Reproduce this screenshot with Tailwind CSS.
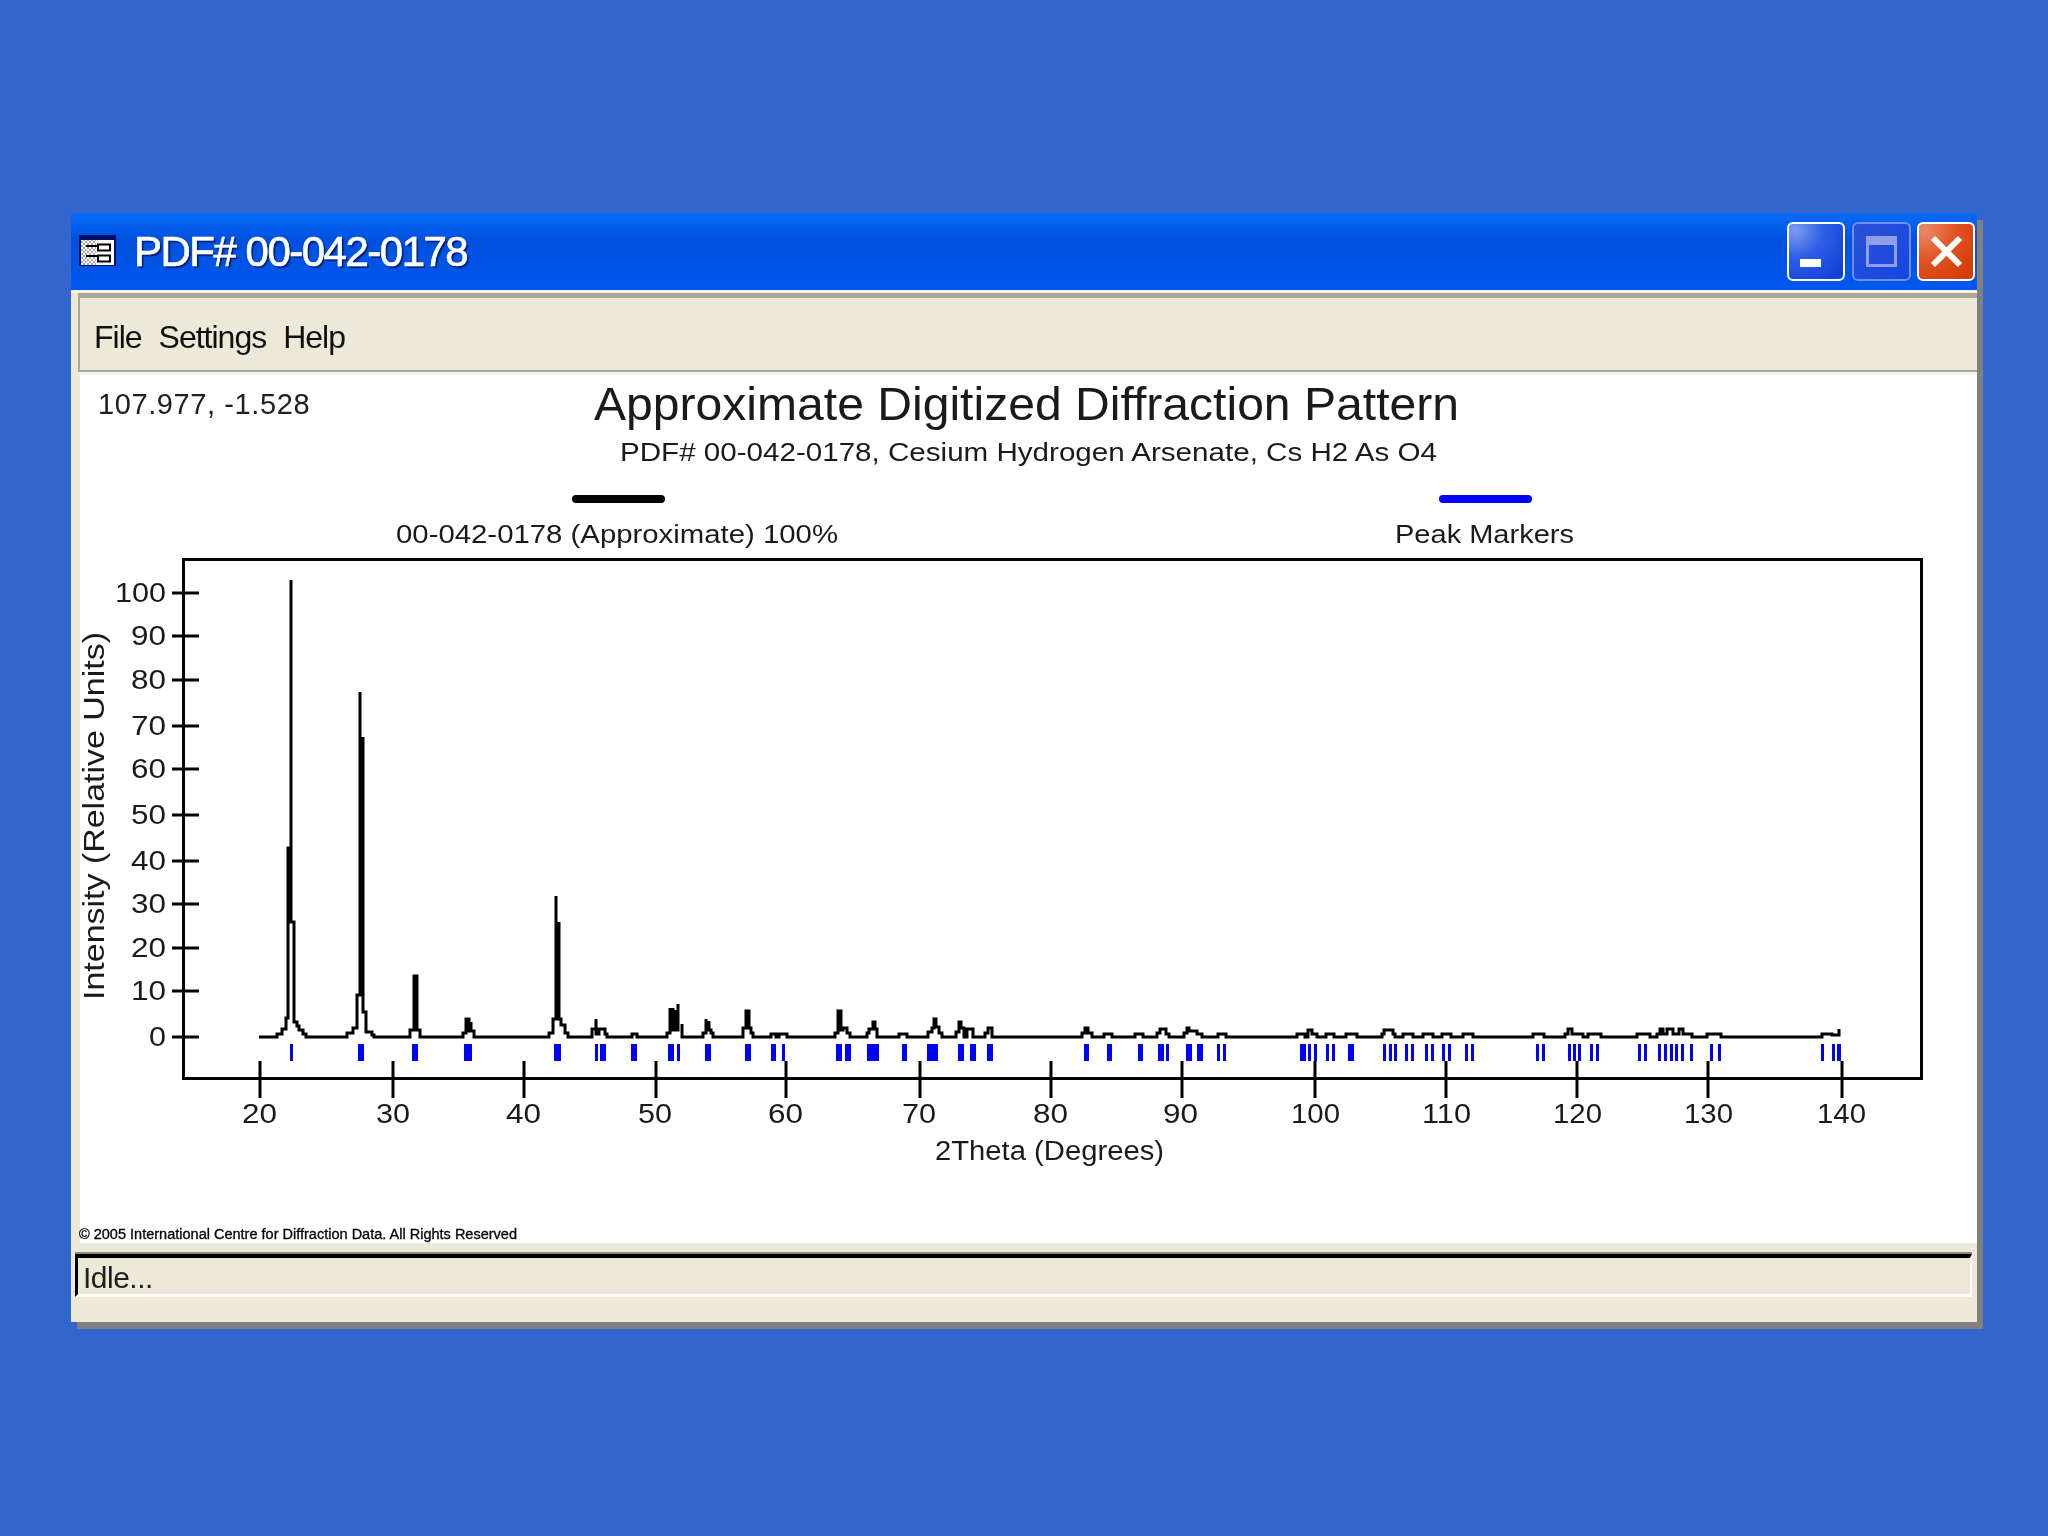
<!DOCTYPE html>
<html>
<head>
<meta charset="utf-8">
<script src="https://cdn.jsdelivr.net/npm/@tailwindcss/browser@4"></script>
</head>
<body class="m-0 bg-[#3366cc]">
<div class="relative w-[2048px] h-[1536px] bg-[#3366cc] overflow-hidden font-['Liberation_Sans',sans-serif]">
  <div class="absolute left-[71px] top-[213px] w-[1906px] h-[1109px] shadow-[6px_7px_0_0_#808080] flex flex-col bg-[#ece9d8]">
    <div class="h-[77px] shrink-0 flex items-center bg-gradient-to-b from-[#0a6cf8] via-[#0050dd] via-35% to-[#0058ee] relative">
      <svg class="ml-[8px] shrink-0 -mt-[3px] blur-[0.3px]" width="37" height="31" viewBox="0 0 37 31">
        <defs>
          <pattern id="dither" width="4" height="4" patternUnits="userSpaceOnUse">
            <rect width="4" height="4" fill="#fff"/>
            <rect width="2" height="2" fill="#a8a8a8"/>
            <rect x="2" y="2" width="2" height="2" fill="#a8a8a8"/>
          </pattern>
        </defs>
        <rect width="37" height="31" fill="#00106a"/>
        <rect x="2" y="5" width="33" height="25" fill="#fff"/>
        <rect x="2" y="5" width="15" height="25" fill="url(#dither)"/>
        <rect x="7" y="10" width="11" height="2" fill="#000"/>
        <rect x="7" y="20" width="11" height="2" fill="#000"/>
        <rect x="19" y="9.500" width="12" height="6" fill="none" stroke="#000" stroke-width="2"/>
        <rect x="19" y="20.500" width="12" height="6" fill="none" stroke="#000" stroke-width="2"/>
      </svg>
      <span class="ml-[18px] text-white text-[42px] leading-none font-normal [-webkit-text-stroke:0.7px_white] [text-shadow:2px_2px_1px_#00207a] tracking-[-1.5px] blur-[0.4px]">PDF# 00-042-0178</span>
      <div class="absolute left-[1716px] top-[9px] w-[58px] h-[59px] rounded-[6px] border-[2px] border-white bg-[radial-gradient(circle_at_12%_10%,#7d9df0,#2f5fe6_40%,#1240d8_90%)] flex items-end justify-center pb-[12px] blur-[0.3px]">
        <div class="w-[21px] h-[8px] bg-white -ml-[11px]"></div>
      </div>
      <div class="absolute left-[1781px] top-[9px] w-[59px] h-[59px] rounded-[6px] border-[2px] border-[#6f90ee] bg-gradient-to-br from-[#2a52d8] to-[#1546e0] flex items-center justify-center blur-[0.3px]">
        <div class="w-[31px] h-[31px] border-[3px] border-t-[9px] border-[#8f9fe8]"></div>
      </div>
      <div class="absolute left-[1846px] top-[9px] w-[58px] h-[59px] rounded-[6px] border-[2px] border-white bg-[radial-gradient(circle_at_10%_10%,#e88a68,#e25222_45%,#d23c06_90%)] flex items-center justify-center blur-[0.3px]">
        <svg width="33" height="33" viewBox="0 0 33 33"><path d="M3 3 L30 30 M30 3 L3 30" stroke="#fff" stroke-width="6" fill="none"/></svg>
      </div>
    </div>
    <div class="h-[3px] shrink-0 bg-[#f6f4ea]"></div>
    <div class="ml-[7px] h-[79px] shrink-0 border-l-[2px] border-t-[5px] border-b-[2px] border-[#aca899] flex items-center pl-[14px] pt-[6px] gap-[17px] text-[32px] text-[#101010] tracking-[-1px] blur-[0.4px] leading-none">
      <span>File</span><span>Settings</span><span>Help</span>
    </div>
    <div class="h-[3px] ml-[7px] shrink-0 bg-[#f6f4ea]"></div>
    <div class="flex-1 ml-[9px] bg-white relative min-h-0">
      <span class="absolute left-[18px] top-[15px] text-[29px] leading-none text-[#202020] tracking-[0.6px] blur-[0.4px]">107.977, -1.528</span>
    </div>
    <div class="h-[79px] shrink-0 relative">
      <div class="absolute left-[4px] top-[9px] w-[1897px] h-[45px] border-t-[2px] border-[#8a8a70]">
        <div class="h-full border-t-[4px] border-l-[3px] border-black border-b-[3px] border-r-[2px] border-b-[#fffdf5] border-r-[#fffdf5] pl-[5px] pt-[5px] text-[30px] tracking-[-0.5px] leading-none text-[#202020] blur-[0.3px]">Idle...</div>
      </div>
    </div>
  </div>

  <svg class="absolute left-0 top-0 blur-[0.35px]" width="2048" height="1536" viewBox="0 0 2048 1536" font-family="Liberation Sans" fill="#1a1a1a">
    <text x="594" y="420" font-size="46" textLength="865" lengthAdjust="spacingAndGlyphs">Approximate Digitized Diffraction Pattern</text>
    <text x="620" y="461" font-size="26" textLength="817" lengthAdjust="spacingAndGlyphs">PDF# 00-042-0178, Cesium Hydrogen Arsenate, Cs H2 As O4</text>
    <line x1="576" y1="499" x2="661" y2="499" stroke="#000" stroke-width="8" stroke-linecap="round"/>
    <line x1="1443" y1="499" x2="1528" y2="499" stroke="#0000ff" stroke-width="8" stroke-linecap="round"/>
    <text x="396" y="543" font-size="26" textLength="442" lengthAdjust="spacingAndGlyphs">00-042-0178 (Approximate) 100%</text>
    <text x="1395" y="543" font-size="26" textLength="179" lengthAdjust="spacingAndGlyphs">Peak Markers</text>

    <rect x="183.500" y="559.500" width="1738" height="519" fill="none" stroke="#000" stroke-width="3"/>

    <path stroke="#000" stroke-width="3" fill="none" d="M172 593H199M172 636H199M172 680H199M172 726H199M172 769H199M172 815H199M172 861H199M172 904H199M172 948H199M172 991H199M172 1037H199M260 1061V1098M393 1061V1098M524 1061V1098M656 1061V1098M786 1061V1098M920 1061V1098M1051 1061V1098M1182 1061V1098M1315 1061V1098M1446 1061V1098M1577 1061V1098M1708 1061V1098M1842 1061V1098"/>

    <path stroke="#000" stroke-width="3" fill="none" stroke-linejoin="miter" d="M259 1037H277V1034H282V1029H286V1018H288V848H291V580V922H294V1022H297V1026H299V1030H303V1034H306V1037H347V1033H353V1028H357V995H360V692V995M363 737V1012H366V1032H372V1035H374V1037H410V1030H414V976H417V979V1030H420V1037H463V1033H466V1019H469V1023V1031H471V1022V1031H474V1037H549V1033H553V1019H556V896V1019M559 922V1019H561V1025H565V1033H568V1037H592V1029H596V1019V1034H599V1029H605V1034H607V1037H632V1034H637V1037H667V1033H670V1008V1030H673V1008V1030H676V1010V1030H678V1004V1030M682 1024V1037H703V1033H706V1019V1030H709V1021V1030H711V1033H713V1037H743V1028H746V1011H749V1019V1028H751V1033H753V1037H771V1034H776V1037H779V1034H787V1037H835V1033H838V1011H841V1011V1030H843V1028H847V1033H850V1037H867V1033H869V1029H873V1022H875V1029H877V1037H899V1034H907V1037H928V1032H932V1028H934V1019H936V1027H939V1033H942V1037H956V1032H959V1022H961V1028H964V1037H967V1029H973V1037H985V1033H988V1028H992V1037H1082V1033H1085V1028H1088V1033H1092V1037H1104V1034H1112V1037H1135V1034H1143V1037H1157V1033H1160V1029H1166V1034H1169V1037H1184V1033H1187V1028H1189V1031H1195V1031H1197V1034H1202V1037H1218V1034H1226V1037H1297V1034H1305V1037H1308V1030H1312V1034H1317V1037H1326V1034H1334V1037H1346V1034H1357V1037H1382V1034H1384V1030H1393V1034H1395V1037H1403V1034H1413V1037H1423V1034H1433V1037H1442V1034H1451V1037H1463V1034H1473V1037H1533V1034H1544V1037H1565V1034H1568V1029H1572V1034H1583V1037H1588V1034H1601V1037H1637V1034H1650V1037H1657V1034H1660V1029H1663V1034H1667V1029H1673V1034H1679V1029H1683V1034H1692V1037H1707V1034H1721V1037H1822V1034H1832V1035H1839V1029"/>

    <path fill="#0000ff" d="M290 1044h3v17h-3zM358 1044h6v17h-6zM412 1044h6v17h-6zM464 1044h8v17h-8zM554 1044h7v17h-7zM595 1044h3v17h-3zM600 1044h6v17h-6zM631 1044h6v17h-6zM668 1044h6v17h-6zM677 1044h3v17h-3zM705 1044h6v17h-6zM745 1044h6v17h-6zM771 1044h5v17h-5zM782 1044h3v17h-3zM836 1044h6v17h-6zM845 1044h6v17h-6zM867 1044h12v17h-12zM902 1044h5v17h-5zM927 1044h11v17h-11zM958 1044h6v17h-6zM970 1044h6v17h-6zM987 1044h6v17h-6zM1084 1044h5v17h-5zM1107 1044h5v17h-5zM1138 1044h5v17h-5zM1158 1044h6v17h-6zM1166 1044h3v17h-3zM1186 1044h6v17h-6zM1197 1044h6v17h-6zM1217 1044h3v17h-3zM1223 1044h3v17h-3zM1300 1044h6v17h-6zM1308 1044h3v17h-3zM1314 1044h3v17h-3zM1326 1044h3v17h-3zM1332 1044h3v17h-3zM1348 1044h6v17h-6zM1383 1044h3v17h-3zM1389 1044h3v17h-3zM1394 1044h3v17h-3zM1405 1044h3v17h-3zM1411 1044h3v17h-3zM1425 1044h3v17h-3zM1431 1044h3v17h-3zM1442 1044h3v17h-3zM1448 1044h3v17h-3zM1465 1044h3v17h-3zM1471 1044h3v17h-3zM1536 1044h3v17h-3zM1542 1044h3v17h-3zM1568 1044h3v17h-3zM1573 1044h3v17h-3zM1578 1044h3v17h-3zM1590 1044h3v17h-3zM1596 1044h3v17h-3zM1638 1044h3v17h-3zM1644 1044h3v17h-3zM1658 1044h3v17h-3zM1664 1044h3v17h-3zM1670 1044h3v17h-3zM1675 1044h3v17h-3zM1681 1044h3v17h-3zM1690 1044h3v17h-3zM1710 1044h3v17h-3zM1718 1044h3v17h-3zM1821 1044h3v17h-3zM1832 1044h3v17h-3zM1837 1044h4v17h-4z"/>

    <g font-size="27">
      <text x="242" y="1123" textLength="35" lengthAdjust="spacingAndGlyphs">20</text>
      <text x="376" y="1123" textLength="34" lengthAdjust="spacingAndGlyphs">30</text>
      <text x="506" y="1123" textLength="35" lengthAdjust="spacingAndGlyphs">40</text>
      <text x="638" y="1123" textLength="34" lengthAdjust="spacingAndGlyphs">50</text>
      <text x="768" y="1123" textLength="35" lengthAdjust="spacingAndGlyphs">60</text>
      <text x="902" y="1123" textLength="34" lengthAdjust="spacingAndGlyphs">70</text>
      <text x="1033" y="1123" textLength="35" lengthAdjust="spacingAndGlyphs">80</text>
      <text x="1163" y="1123" textLength="35" lengthAdjust="spacingAndGlyphs">90</text>
      <text x="1291" y="1123" textLength="49" lengthAdjust="spacingAndGlyphs">100</text>
      <text x="1422" y="1123" textLength="49" lengthAdjust="spacingAndGlyphs">110</text>
      <text x="1553" y="1123" textLength="49" lengthAdjust="spacingAndGlyphs">120</text>
      <text x="1684" y="1123" textLength="49" lengthAdjust="spacingAndGlyphs">130</text>
      <text x="1817" y="1123" textLength="49" lengthAdjust="spacingAndGlyphs">140</text>
      <text x="935" y="1160" textLength="229" lengthAdjust="spacingAndGlyphs">2Theta (Degrees)</text>
      <text x="115" y="602" textLength="51" lengthAdjust="spacingAndGlyphs">100</text>
      <text x="131" y="645" textLength="35" lengthAdjust="spacingAndGlyphs">90</text>
      <text x="131" y="689" textLength="35" lengthAdjust="spacingAndGlyphs">80</text>
      <text x="131" y="735" textLength="35" lengthAdjust="spacingAndGlyphs">70</text>
      <text x="131" y="778" textLength="35" lengthAdjust="spacingAndGlyphs">60</text>
      <text x="131" y="824" textLength="35" lengthAdjust="spacingAndGlyphs">50</text>
      <text x="131" y="870" textLength="35" lengthAdjust="spacingAndGlyphs">40</text>
      <text x="131" y="913" textLength="35" lengthAdjust="spacingAndGlyphs">30</text>
      <text x="131" y="957" textLength="35" lengthAdjust="spacingAndGlyphs">20</text>
      <text x="131" y="1000" textLength="35" lengthAdjust="spacingAndGlyphs">10</text>
      <text x="149" y="1046" textLength="17" lengthAdjust="spacingAndGlyphs">0</text>
    </g>
    <text transform="translate(104 1000) rotate(-90)" font-size="30" textLength="368" lengthAdjust="spacingAndGlyphs">Intensity (Relative Units)</text>
    <text x="79" y="1239" font-size="14" fill="#000" stroke="#000" stroke-width="0.3" textLength="438" lengthAdjust="spacingAndGlyphs">© 2005 International Centre for Diffraction Data. All Rights Reserved</text>
  </svg>
</div>
</body>
</html>
